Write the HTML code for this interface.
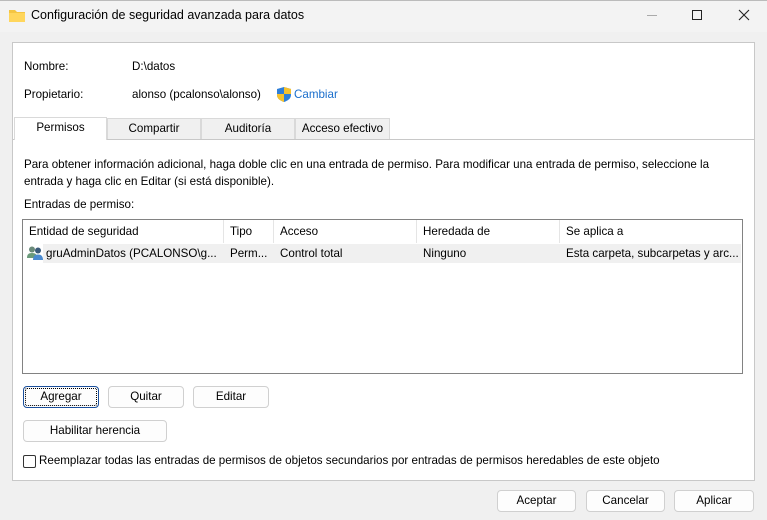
<!DOCTYPE html>
<html><head><meta charset="utf-8"><style>
*{box-sizing:border-box;margin:0;padding:0}
body{width:767px;height:520px;background:#f0f0f0;font-family:"Liberation Sans",sans-serif;font-size:11.6px;color:#000;position:relative;overflow:hidden}
.a{position:absolute;white-space:nowrap}
.btn{position:absolute;height:22px;border:1px solid #d0d0d0;border-radius:4px;background:#fdfdfd;text-align:center;line-height:20px}
.tab{position:absolute;top:118px;height:21px;border:1px solid #d9d9d9;border-bottom:none;background:#f0f0f0;text-align:center;line-height:20px}
.hd{position:absolute;top:220px;height:23px;line-height:23px;padding-left:6px;border-right:1px solid #e5e5e5}
.rw{position:absolute;top:244px;height:19px;line-height:19px;padding-left:6px;overflow:hidden}
</style></head><body>
<div class="a" style="left:0;top:0;width:767px;height:32px;background:#f3f3f3;border-top:1px solid #bbb"></div>
<svg class="a" style="left:9px;top:9px" width="16" height="13"><path d="M0 1h6l2 2h8v10H0z" fill="#f4c542"/><path d="M0 4h16v9H0z" fill="#ffd65c"/></svg>
<div class="a" style="left:31px;top:8px;font-size:12.5px">Configuración de seguridad avanzada para datos</div>
<div class="a" style="left:647px;top:15px;width:10px;height:1px;background:#aaa"></div>
<div class="a" style="left:692px;top:10px;width:10px;height:10px;border:1px solid #222"></div>
<svg class="a" style="left:738px;top:9px" width="12" height="12"><path d="M1 1L11 11M11 1L1 11" stroke="#222" stroke-width="1.1"/></svg>
<div class="a" style="left:12px;top:42px;width:743px;height:439px;background:#fff;border:1px solid #c8c8c8"></div>
<div class="a" style="left:24px;top:60px">Nombre:</div>
<div class="a" style="left:132px;top:60px">D:\datos</div>
<div class="a" style="left:24px;top:88px">Propietario:</div>
<div class="a" style="left:132px;top:88px">alonso (pcalonso\alonso)</div>
<svg class="a" style="left:277px;top:87px" width="14" height="15"><path d="M7 0L14 2V8C14 12 10 14 7 15C4 14 0 12 0 8V2Z" fill="#2f7fd8"/><path d="M7 0V7H0V8C0 12 4 14 7 15V7H14V2Z" fill="#f6c22e"/></svg>
<div class="a" style="left:294px;top:88px;color:#1a6ecc">Cambiar</div>
<div class="a" style="left:13px;top:139px;width:742px;height:1px;background:#c8c8c8"></div>
<div class="tab" style="left:14px;width:93px;background:#fff;top:117px;height:23px">Permisos</div>
<div class="tab" style="left:107px;width:94px">Compartir</div>
<div class="tab" style="left:201px;width:94px">Auditoría</div>
<div class="tab" style="left:295px;width:95px">Acceso efectivo</div>
<div class="a" style="left:24px;top:156px;line-height:17px">Para obtener información adicional, haga doble clic en una entrada de permiso. Para modificar una entrada de permiso, seleccione la<br>entrada y haga clic en Editar (si está disponible).</div>
<div class="a" style="left:24px;top:198px">Entradas de permiso:</div>
<div class="a" style="left:22px;top:219px;width:721px;height:155px;border:1px solid #828282;background:#fff"></div>
<div class="hd" style="left:23px;width:201px">Entidad de seguridad</div>
<div class="hd" style="left:224px;width:50px">Tipo</div>
<div class="hd" style="left:274px;width:143px">Acceso</div>
<div class="hd" style="left:417px;width:143px">Heredada de</div>
<div class="hd" style="left:560px;width:181px;border-right:none">Se aplica a</div>
<div class="a" style="left:43px;top:244px;width:698px;height:19px;background:#f0f0f0"></div>
<svg class="a" style="left:27px;top:246px" width="16" height="14"><circle cx="5" cy="3.5" r="3" fill="#6a8a7a"/><path d="M0 12C0 8 2 7 5 7S10 8 10 12Z" fill="#6a9a7a"/><circle cx="11" cy="4.5" r="3" fill="#3a5a7a"/><path d="M6 14C6 10 8 8.5 11 8.5S16 10 16 14Z" fill="#4a8ad0"/></svg>
<div class="rw" style="left:40px;width:184px">gruAdminDatos (PCALONSO\g...</div>
<div class="rw" style="left:224px;width:50px">Perm...</div>
<div class="rw" style="left:274px">Control total</div>
<div class="rw" style="left:417px">Ninguno</div>
<div class="rw" style="left:560px;width:181px">Esta carpeta, subcarpetas y arc...</div>
<div class="btn" style="left:23px;top:386px;width:76px;border:1px solid #1a4f9c;outline:1px dotted #000;outline-offset:-3px">Agregar</div>
<div class="btn" style="left:108px;top:386px;width:76px">Quitar</div>
<div class="btn" style="left:193px;top:386px;width:76px">Editar</div>
<div class="btn" style="left:23px;top:420px;width:144px">Habilitar herencia</div>
<div class="a" style="left:23px;top:455px;width:13px;height:13px;border:1px solid #333;border-radius:2px;background:#fff"></div>
<div class="a" style="left:39px;top:454px">Reemplazar todas las entradas de permisos de objetos secundarios por entradas de permisos heredables de este objeto</div>
<div class="btn" style="left:497px;top:490px;width:79px">Aceptar</div>
<div class="btn" style="left:586px;top:490px;width:79px">Cancelar</div>
<div class="btn" style="left:674px;top:490px;width:80px">Aplicar</div>
</body></html>
